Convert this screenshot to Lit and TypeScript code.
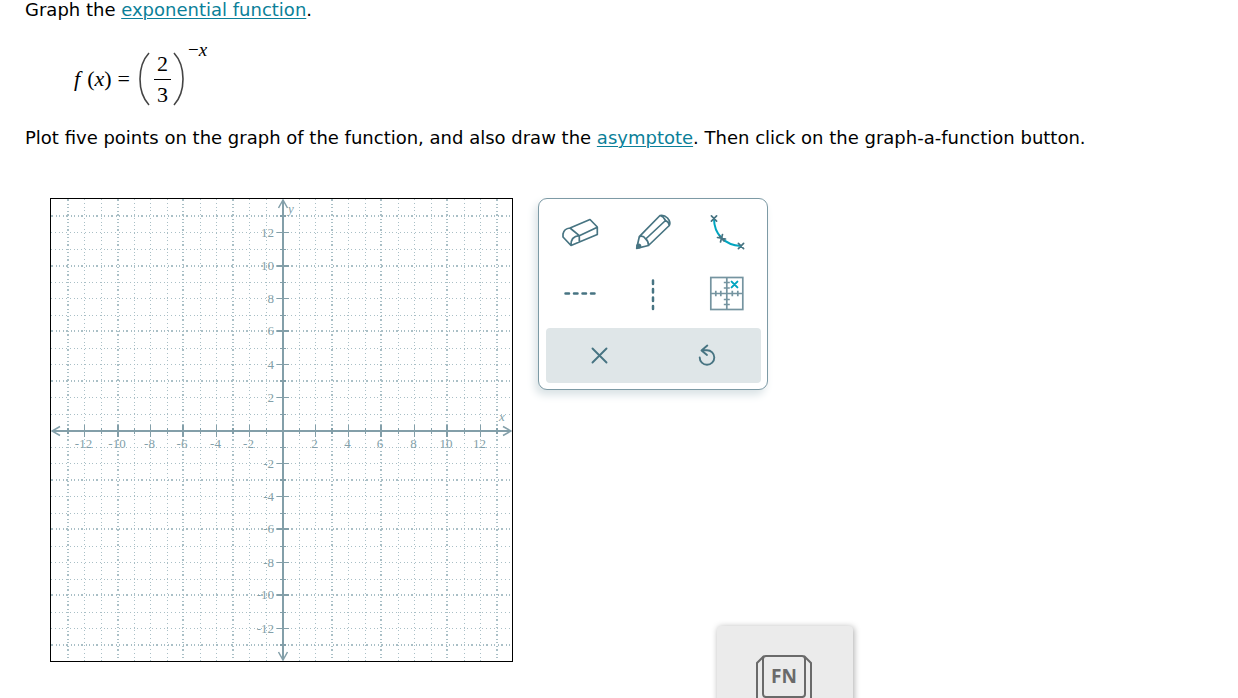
import { LitElement, html, svg, css } from "lit";
import { customElement } from "lit/decorators.js";

const UNIT = 16.5;
const HEAVY = [3, 6, 10, 13];
const ORIGIN = 232;

const place = (k: number) => {
  const exact = 231.5 + UNIT * k;
  if (HEAVY.includes(Math.abs(k))) {
    return { at: k < -6 ? Math.ceil(exact) : Math.floor(exact), w: 2, kind: "heavy" };
  }
  return { at: Math.floor(exact) + 0.5, w: 1, kind: "light" };
};

const STEPS = Array.from({ length: 27 }, (_, i) => i - 13).filter((k) => k !== 0);

@customElement("function-graph")
export class FunctionGraph extends LitElement {
  static styles = css`
    :host { display: block; border: 1px solid #000; }
    svg { display: block; width: 461px; height: 462px; }
    .light { stroke: #a9bfc6; stroke-width: 1; stroke-dasharray: 1 3 1 3 1 2 1 3; }
    .heavy { stroke: #a9bfc6; stroke-width: 2; stroke-dasharray: 2 3 1 2 1 3 1 2; }
    .axis { stroke: #839fa9; fill: none; stroke-width: 2; }
    .arrow { stroke: #839fa9; fill: none; stroke-width: 1.5; }
    .tick { stroke: #839fa9; }
    .crisp { shape-rendering: crispEdges; }
    text { font-family: "Liberation Serif", serif; font-size: 13px; fill: #839fa9; }
    .name { font-style: italic; }
  `;
  render() {
    return html`<svg viewBox="0 0 461 462" role="img" aria-label="Coordinate plane">
      <g class="crisp">
        ${STEPS.map((k) => {
          const { at, kind } = place(k);
          return svg`<line class=${kind} x1=${at} x2=${at} y1="0" y2="462"></line>
            <line class=${kind} y1=${at} y2=${at} x1="0" x2="461"></line>`;
        })}
      </g>
      <g class="crisp">
        <path class="axis" d="M232 1V461M1 232H460"></path>
        ${STEPS.map((k) => {
          const { at, w } = place(k);
          const r = k % 2 === 0 ? 6 : 3;
          return svg`<path class="tick" stroke-width=${w} d="M${at} ${ORIGIN - r}v${2 * r}M${ORIGIN - r} ${at}h${2 * r}"></path>`;
        })}
      </g>
      <path class="arrow" d="M227.5 9l4.5-8l4.5 8M227.5 453l4.5 8l4.5-8M9 227.5l-8 4.5l8 4.5M452 227.5l8 4.5l-8 4.5"></path>
      ${STEPS.filter((k) => k % 2 === 0).map((k) => {
        const { at } = place(k);
        return svg`<text x=${at - 1} y="249" text-anchor="middle">${k}</text>
          <text x="223" y=${at + 4} text-anchor="end">${-k}</text>`;
      })}
      <text class="name" x="237" y="14">y</text>
      <text class="name" x="448" y="222">x</text>
    </svg>`;
  }
}

const cross = (x: number, y: number, r: number) =>
  svg`<path d="M${x - r} ${y - r}l${2 * r} ${2 * r}m0 ${-2 * r}l${-2 * r} ${2 * r}"></path>`;

const TOOLS = [
  {
    name: "Eraser",
    art: svg`<path d="M10 15L30 6.5L37.3 14V21.5L11 32.5L3 24V21Q4 15.5 10 15L19.3 22.7V29M19.3 22.7L37.3 14.3M11 32.5Q10.5 23.5 19.3 22.7"></path>`,
  },
  {
    name: "Pencil",
    art: svg`<path d="M3.7 35.3L6.3 23.7L27 2.5Q31 1.5 34.5 5Q38 9 36.3 12.5L15.5 32.5L3.7 35.3zM6.3 23.7Q10 22 12.7 26Q15.5 28 15.5 32.5M12.7 26L32.5 7.5M27 2.5Q30.5 3.5 32.5 7.5Q36 9 36.3 12.5"></path>
      <circle class="dot" cx="5.7" cy="33" r="2.6"></circle>`,
  },
  {
    name: "Curve through points",
    art: svg`<path class="teal" d="M7 5.5C7 21 17.5 32 34 33"></path>
      ${cross(7, 5.5, 2.6)}${cross(34, 33, 2.6)}
      <path d="M10.5 24.5L18.5 26M15.5 21.5L13.5 29M12.5 23L17 28"></path>`,
  },
  { name: "Horizontal asymptote", art: svg`<path class="dash" d="M5.5 19.5H35"></path>` },
  { name: "Vertical asymptote", art: svg`<path class="dash" d="M20 6.5V35"></path>` },
  {
    name: "Plot a point",
    art: svg`<g class="plane"><rect x="3.8" y="3.5" width="32" height="32"></rect>
      <path d="M19.8 3.5v32M3.8 19.5h32"></path>
      <path d="M8.8 16.8v5.4M13.8 16.8v5.4M25.3 16.8v5.4M30.8 16.8v5.4M16.8 8.5h6M16.8 14h6M16.8 25.5h6M16.8 30.5h6"></path></g>
      <g class="teal">${cross(27.5, 10.5, 2.9)}</g>`,
  },
];

@customElement("graph-tools")
export class GraphTools extends LitElement {
  static styles = css`
    :host {
      display: block;
      box-sizing: border-box;
      width: 230px;
      padding: 7px 6px 6px 7px;
      border: 1px solid #7d9aa5;
      border-radius: 9px;
      background: #fff;
      box-shadow: -3px 5px 8px #d9e2e5;
    }
    .tools { display: grid; grid-template-columns: repeat(3, 1fr); grid-auto-rows: 61px; column-gap: 5px; }
    button { display: flex; align-items: center; justify-content: center; margin: 0; padding: 0; border: 0; background: none; cursor: pointer; }
    .tools button { padding-bottom: 7px; }
    svg { fill: none; stroke: #477482; stroke-width: 1.7; stroke-linejoin: round; stroke-linecap: round; }
    .dot { fill: #477482; stroke: none; }
    .teal { stroke: #00a5c0; stroke-width: 2; }
    .dash { stroke-width: 2.5; stroke-dasharray: 3.5 5; }
    .plane { stroke: #7594a0; stroke-linejoin: miter; stroke-linecap: butt; }
    .actions { display: grid; grid-template-columns: 1fr 1fr; height: 55px; border-radius: 4px; background: #dfe6e8; }
    .actions svg { stroke-width: 1.9; }
  `;
  render() {
    return html`<div class="tools">
        ${TOOLS.map(
          (t) => html`<button type="button" aria-label=${t.name}><svg width="40" height="40">${t.art}</svg></button>`
        )}
      </div>
      <div class="actions">
        <button type="button" aria-label="Clear">
          <svg width="24" height="24"><path d="M4.5 4.5l14 14M18.5 4.5l-14 14"></path></svg>
        </button>
        <button type="button" aria-label="Undo">
          <svg width="24" height="24"><path d="M4.7 13.5A7.3 7.3 0 1 0 12 6.2H6.8M12.3 1.5L6.5 6.5l5.5 4.5"></path></svg>
        </button>
      </div>`;
  }
}

@customElement("math-formula")
export class MathFormula extends LitElement {
  static styles = css`
    :host {
      display: flex;
      align-items: center;
      height: 78px;
      padding-left: 49px;
      font-family: "Liberation Serif", serif;
      font-size: 22px;
      line-height: 22px;
    }
    .f { margin-right: 7px; }
    .eq { margin: 0 8px 0 6px; }
    .frac { display: flex; flex-direction: column; width: 17px; margin: 0 2px 0 4px; text-align: center; line-height: 30px; }
    .num { border-bottom: 1px solid #000; }
    .exp { align-self: flex-start; margin-left: 3px; font-size: 19px; line-height: 20px; }
    svg { fill: none; stroke: #444; stroke-width: 1.6; }
  `;
  render() {
    return html`<i class="f">f</i><span>(<i>x</i>)</span><span class="eq">=</span
      ><svg width="12" height="54"><path d="M11 1C-1 14 -1 40 11 53"></path></svg
      ><span class="frac"><span class="num">2</span><span>3</span></span
      ><svg width="12" height="54"><path d="M1 1C13 14 13 40 1 53"></path></svg
      ><span class="exp">−<i>x</i></span>`;
  }
}

@customElement("fn-card")
export class FnCard extends LitElement {
  static styles = css`
    button {
      display: block;
      width: 136px;
      padding: 28px 0 40px;
      border: 0;
      border-radius: 4px;
      background: #ebebeb;
      box-shadow: 1px 1px 6px #aaa;
      cursor: pointer;
    }
    svg { display: block; margin: 0 auto; }
    path, rect { fill: none; stroke: #6a6a6a; stroke-width: 2; }
    text { font: bold 19px "Open Sans", sans-serif; fill: #6a6a6a; }
  `;
  render() {
    return html`<button type="button" aria-label="Graph a function">
      <svg width="58" height="58">
        <path d="M8 2L1 9V56H55V9L48 2"></path>
        <rect x="7" y="2" width="42" height="41" rx="3"></rect>
        <path d="M9 43H47"></path>
        <text x="28" y="29" text-anchor="middle">FN</text>
      </svg>
    </button>`;
  }
}

@customElement("app-root")
export class AppRoot extends LitElement {
  static styles = css`
    :host {
      display: block;
      box-sizing: border-box;
      height: 100vh;
      overflow: hidden;
      padding-left: 25px;
      background: #fff;
      color: #000;
      font-family: "DejaVu Sans", Verdana, sans-serif;
      font-size: 18px;
      line-height: 20px;
    }
    p { margin: 0; }
    a { color: #0b7f99; text-decoration: underline; text-decoration-thickness: 1px; text-underline-offset: 2px; }
    math-formula { margin: 20px 0 10px; }
    .work { display: flex; align-items: flex-start; gap: 25px; padding: 50px 0 0 25px; }
    .side { display: flex; flex-direction: column; gap: 236px; }
    fn-card { margin-left: 179px; }
  `;
  render() {
    return html`<p>Graph the <a href="#exponential">exponential function</a>.</p>
      <math-formula></math-formula>
      <p>Plot five points on the graph of the function, and also draw the <a href="#asymptote">asymptote</a>. Then click on the graph-a-function button.</p>
      <div class="work">
        <function-graph></function-graph>
        <div class="side">
          <graph-tools></graph-tools>
          <fn-card></fn-card>
        </div>
      </div>`;
  }
}
